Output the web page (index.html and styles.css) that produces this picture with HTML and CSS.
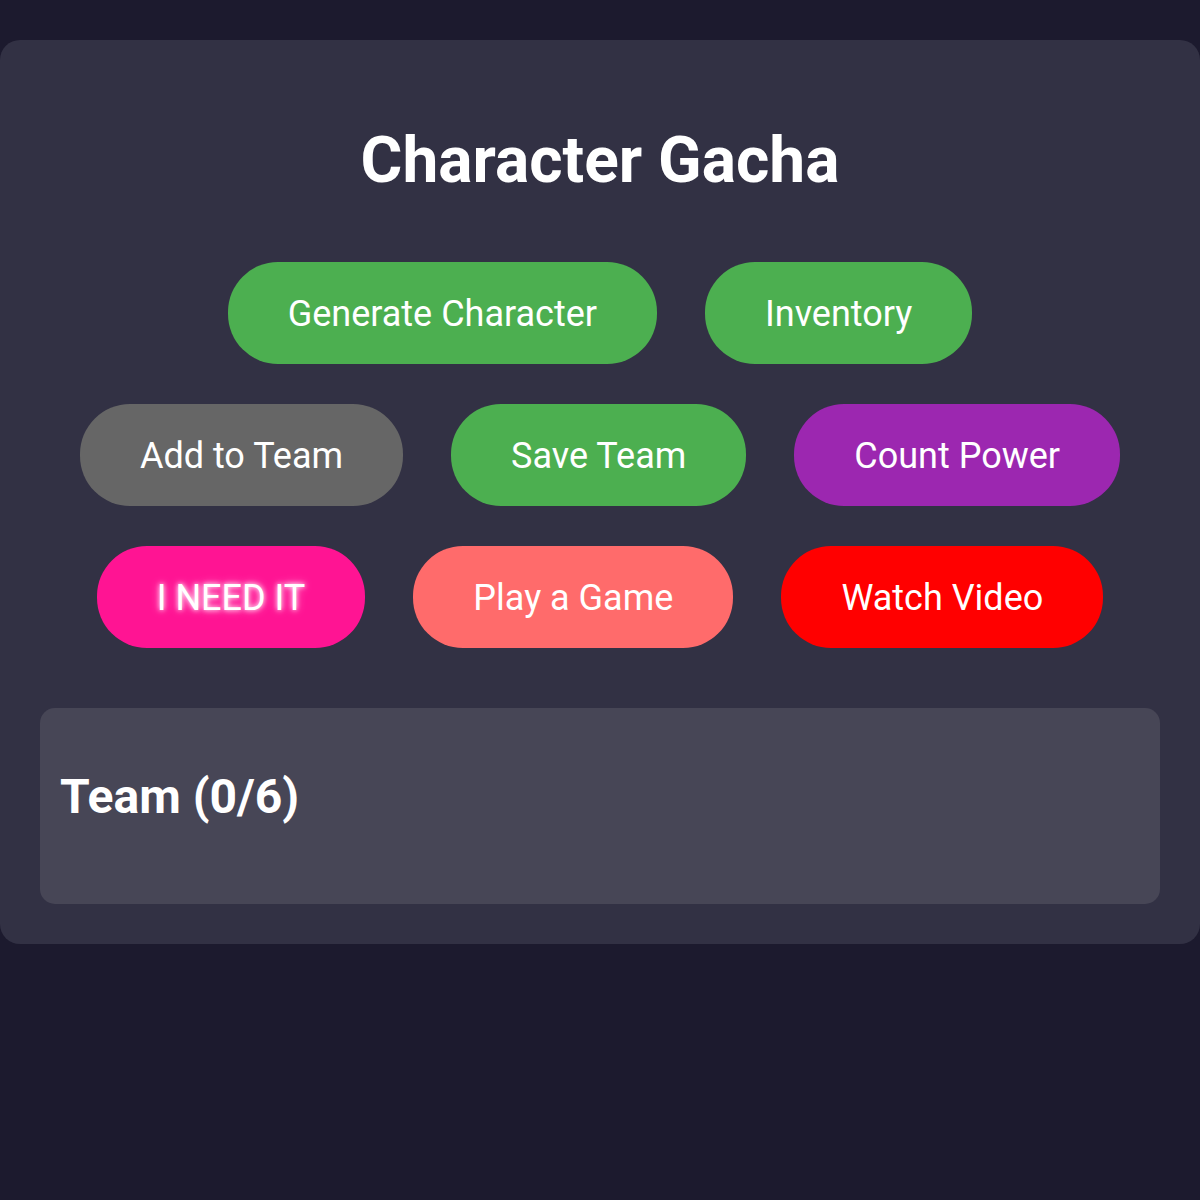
FILE: index.html
```html
<!DOCTYPE html>
<html lang="en">
<head>
    <meta charset="UTF-8">
    <meta name="viewport" content="width=device-width, initial-scale=1.0">
    <title>Character Gacha</title>
    <link rel="stylesheet" href="styles.css">
</head>
<body>

    <div class="container">
        <h1>Character Gacha</h1>

        <div class="buttons">
            <button class="btn green">Generate Character</button>
            <button class="btn green">Inventory</button>
            <button class="btn gray">Add to Team</button>
            <button class="btn green">Save Team</button>
            <button class="btn purple">Count Power</button>
            <button class="btn pink">I NEED IT</button>
            <button class="btn salmon">Play a Game</button>
            <button class="btn red">Watch Video</button>
        </div>

        <div class="team">
            <h2>Team (0/6)</h2>
            <div id="teamList" class="team-list"></div>
        </div>
    </div>

</body>
</html>
```

FILE: styles.css
```css
body {
    font-family: Roboto, 'Liberation Sans', sans-serif;
    background-color: #1c1a2e;
    color: #ffffff;
    margin: 0;
}

.container {
    margin-top: 40px;
    background-color: #323144;
    border-radius: 20px;
    padding: 40px;
    text-align: center;
}

h1 {
    font-size: 64px;
    margin: 43px 0 44px;
}

.buttons {
    display: flex;
    flex-wrap: wrap;
    justify-content: center;
}

.btn {
    font-family: Roboto, 'Liberation Sans', sans-serif;
    font-size: 36px;
    color: #ffffff;
    padding: 31px 60px 29px;
    margin: 20px 24px;
    border: none;
    border-radius: 50px;
    cursor: pointer;
}

.green {
    background-color: #4caf50;
}

.gray {
    background-color: #666666;
}

.purple {
    background-color: #9c27b0;
}

.pink {
    background-color: #ff1493;
    text-shadow: 0 0 5px #ffffff, 0 0 10px #ff8fd0;
}

.salmon {
    background-color: #ff6b6b;
}

.red {
    background-color: #ff0000;
}

.team {
    margin-top: 40px;
    background-color: #474656;
    border-radius: 15px;
    padding: 20px;
    text-align: left;
}

.team h2 {
    font-size: 48px;
    margin: 40px 0;
}

.team-list {
    min-height: 19px;
}
```
